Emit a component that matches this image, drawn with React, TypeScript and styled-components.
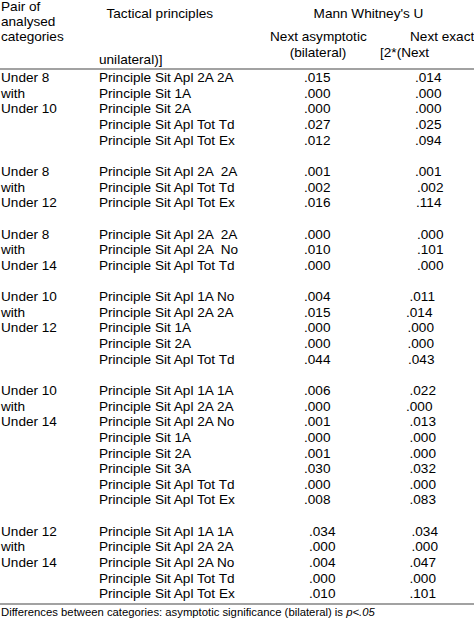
import React from 'react'
import styled, { createGlobalStyle } from 'styled-components'

const ROW_H = 15.65

const GlobalStyle = createGlobalStyle`
  html, body {
    margin: 0;
    padding: 0;
    background: #ffffff;
    overflow: hidden;
  }
  body {
    font-family: "Liberation Sans", Arial, sans-serif;
    color: #000000;
  }
`

const Page = styled.div`
  width: 474px;
  height: 618px;
  overflow: hidden;
  font-size: 13.6px;
`

const Columns = `
  display: grid;
  grid-template-columns: 99px 171px 96px 120px;
`

const Header = styled.div`
  ${Columns}
  height: 68px;
  border-bottom: 2px solid #a2a2a2;
`

const PairCell = styled.div`
  padding-left: 1px;
  margin-top: -1px;
  line-height: 15px;
`

const TacticalCell = styled.div`
  display: flex;
  flex-direction: column;
  justify-content: space-between;
  padding-top: 5.5px;
  line-height: ${ROW_H}px;
  white-space: nowrap;
`

const Indented = styled.div<{ $indent: number }>`
  padding-left: ${p => p.$indent}px;
  white-space: nowrap;
`

const MannBlock = styled.div`
  grid-column: 3 / span 2;
  display: grid;
  grid-template-columns: 96px 1fr;
  grid-template-rows: auto auto;
  padding-top: 5.5px;
  line-height: ${ROW_H}px;
`

const MannTitle = styled.div`
  grid-column: 1 / span 2;
  width: 197px;
  text-align: center;
  margin-bottom: 1px;
  white-space: nowrap;
`

const SubHead = styled.div`
  text-align: center;
  white-space: nowrap;
`

const Body = styled.div`
  display: flex;
  flex-direction: column;
  gap: ${ROW_H}px;
  padding-top: 0.2px;
  border-bottom: 2px solid #a2a2a2;
  padding-bottom: 1.5px;
`

const Group = styled.div`
  display: flex;
  flex-direction: column;
`

const Row = styled.div`
  ${Columns}
  height: ${ROW_H}px;
  line-height: ${ROW_H}px;
  white-space: nowrap;
`

const LabelCell = styled.div`
  padding-left: 1px;
`

const PrincipleCell = styled.div`
  white-space: pre;
`

const ValueCell = styled.div<{ $indent: number }>`
  padding-left: ${p => p.$indent}px;
`

const Footnote = styled.div`
  font-size: 11.3px;
  line-height: 11px;
  padding-left: 1px;
  padding-top: 1.5px;
  white-space: nowrap;
`

interface DataRow {
  principle: string
  asymptotic: string
  exact: string
  exactIndent: number
}

interface DataGroup {
  label: string[]
  asymIndent: number
  rows: DataRow[]
}

const r = (principle: string, asymptotic: string, exact: string, exactIndent: number): DataRow =>
  ({ principle, asymptotic, exact, exactIndent })

const groups: DataGroup[] = [
  {
    label: ['Under 8', 'with', 'Under 10'],
    asymIndent: 34,
    rows: [
      r('Principle Sit Apl 2A 2A', '.015', '.014', 49),
      r('Principle Sit 1A', '.000', '.000', 49),
      r('Principle Sit 2A', '.000', '.000', 49),
      r('Principle Sit Apl Tot Td', '.027', '.025', 49),
      r('Principle Sit Apl Tot Ex', '.012', '.094', 49),
    ],
  },
  {
    label: ['Under 8', 'with', 'Under 12'],
    asymIndent: 34,
    rows: [
      r('Principle Sit Apl 2A  2A', '.001', '.001', 49),
      r('Principle Sit Apl Tot Td', '.002', '.002', 51),
      r('Principle Sit Apl Tot Ex', '.016', '.114', 50),
    ],
  },
  {
    label: ['Under 8', 'with', 'Under 14'],
    asymIndent: 34,
    rows: [
      r('Principle Sit Apl 2A  2A', '.000', '.000', 51),
      r('Principle Sit Apl 2A  No', '.010', '.101', 51),
      r('Principle Sit Apl Tot Td', '.000', '.000', 51),
    ],
  },
  {
    label: ['Under 10', 'with', 'Under 12'],
    asymIndent: 34,
    rows: [
      r('Principle Sit Apl 1A No', '.004', '.011', 43.5),
      r('Principle Sit Apl 2A 2A', '.015', '.014', 40),
      r('Principle Sit 1A', '.000', '.000', 41.5),
      r('Principle Sit 2A', '.000', '.000', 41.5),
      r('Principle Sit Apl Tot Td', '.044', '.043', 42),
    ],
  },
  {
    label: ['Under 10', 'with', 'Under 14'],
    asymIndent: 34,
    rows: [
      r('Principle Sit Apl 1A 1A', '.006', '.022', 43.5),
      r('Principle Sit Apl 2A 2A', '.000', '.000', 40),
      r('Principle Sit Apl 2A No', '.001', '.013', 43.5),
      r('Principle Sit 1A', '.000', '.000', 43.5),
      r('Principle Sit 2A', '.001', '.000', 43.5),
      r('Principle Sit 3A', '.030', '.032', 43.5),
      r('Principle Sit Apl Tot Td', '.000', '.000', 43.5),
      r('Principle Sit Apl Tot Ex', '.008', '.083', 43.5),
    ],
  },
  {
    label: ['Under 12', 'with', 'Under 14'],
    asymIndent: 39,
    rows: [
      r('Principle Sit Apl 1A 1A', '.034', '.034', 45.5),
      r('Principle Sit Apl 2A 2A', '.000', '.000', 45.5),
      r('Principle Sit Apl 2A No', '.004', '.047', 43.5),
      r('Principle Sit Apl Tot Td', '.000', '.000', 43.5),
      r('Principle Sit Apl Tot Ex', '.010', '.101', 43.5),
    ],
  },
]

const App: React.FC = () => (
  <Page>
    <GlobalStyle />
    <Header>
      <PairCell>
        Pair of<br />analysed<br />categories
      </PairCell>
      <TacticalCell>
        <Indented $indent={7.5}>Tactical principles</Indented>
        <Indented $indent={0}>unilateral)]</Indented>
      </TacticalCell>
      <MannBlock>
        <MannTitle>Mann Whitney's U</MannTitle>
        <SubHead>
          Next asymptotic<br />(bilateral)
        </SubHead>
        <div>
          <Indented $indent={44}>Next exact</Indented>
          <Indented $indent={14}>[2*(Next</Indented>
        </div>
      </MannBlock>
    </Header>
    <Body>
      {groups.map((g, gi) => (
        <Group key={gi}>
          {g.rows.map((row, ri) => (
            <Row key={ri}>
              <LabelCell>{g.label[ri] ?? ''}</LabelCell>
              <PrincipleCell>{row.principle}</PrincipleCell>
              <ValueCell $indent={g.asymIndent}>{row.asymptotic}</ValueCell>
              <ValueCell $indent={row.exactIndent}>{row.exact}</ValueCell>
            </Row>
          ))}
        </Group>
      ))}
    </Body>
    <Footnote>
      Differences between categories: asymptotic significance (bilateral) is <i>p&lt;.05</i>
    </Footnote>
  </Page>
)

export default App
